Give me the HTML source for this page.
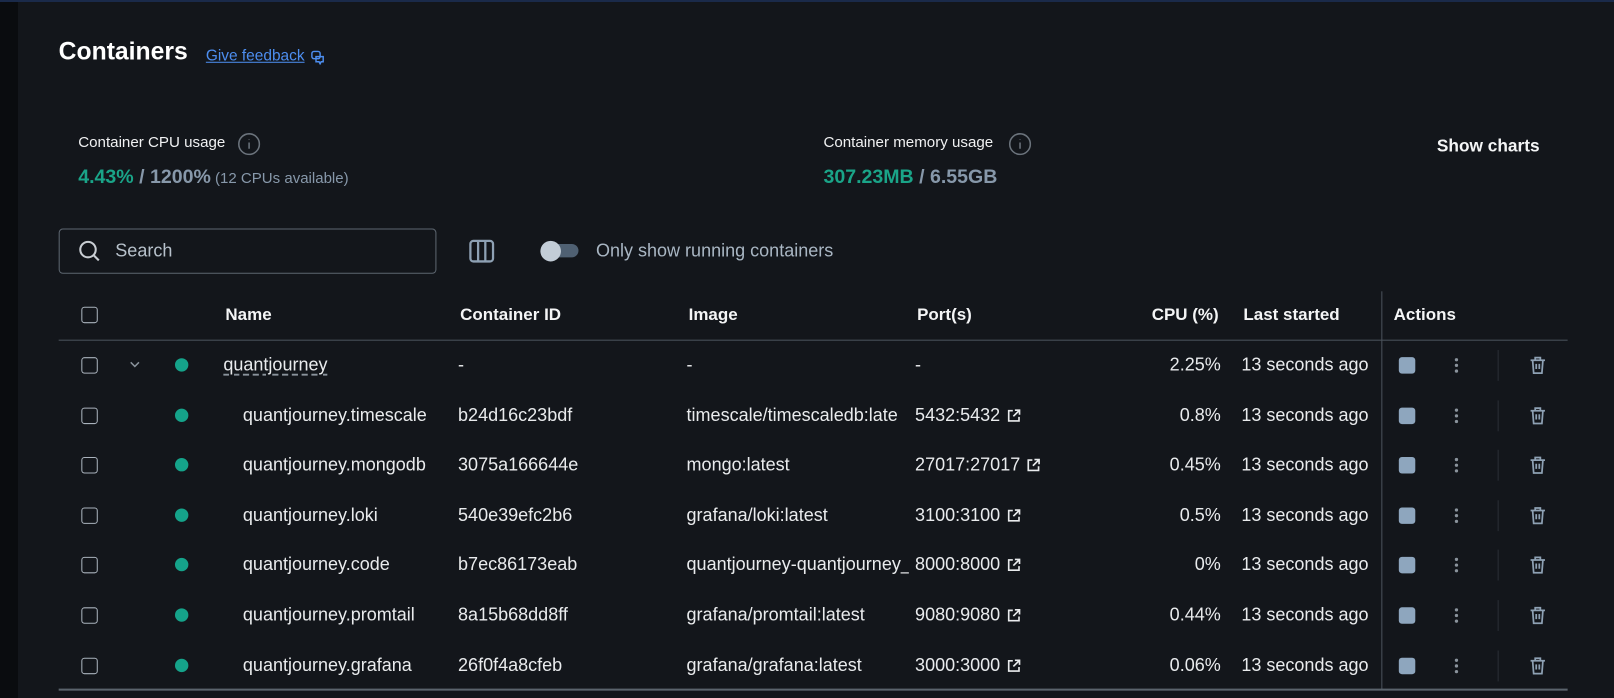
<!DOCTYPE html>
<html><head><meta charset="utf-8"><style>
*{margin:0;padding:0;box-sizing:border-box}
body{width:1614px;height:698px;background:#13161b;font-family:"Liberation Sans",sans-serif;color:#e6e8ea;position:relative;overflow:hidden}
#w{position:absolute;left:0;top:0;width:1568px;height:678px;transform:scale(1.0293);transform-origin:0 0}
.a{position:absolute;white-space:nowrap}
.cb{position:absolute;width:16px;height:16px;border:1.5px solid #aab3bd;border-radius:3px}
.dot{position:absolute;width:13px;height:13px;border-radius:50%;background:#15a38a}
.t{font-size:17.5px;color:#e9ebed}
.h{font-size:16.5px;font-weight:bold;color:#f4f5f6}
.stop{position:absolute;width:16px;height:16px;border-radius:3px;background:#8ea6be}
.sep{position:absolute;width:1px;height:30px;background:#2a2f36}
</style></head><body>
<div class="a" style="left:0;top:0;width:18px;height:698px;background:#0a0c0f"></div>
<div class="a" style="left:0;top:0;width:1614px;height:2px;background:#1a2a4a"></div>
<div id="w">
<div class="a" style="left:57px;top:37px;font-size:24px;font-weight:bold;color:#fff">Containers</div>
<div class="a" style="left:200px;top:46px;font-size:15px;color:#4d8ef0;text-decoration:underline">Give feedback</div>
<svg class="a" style="left:302px;top:49px" width="14" height="14" viewBox="0 0 14 14" fill="none" stroke="#4d8ef0" stroke-width="1.4"><rect x="1" y="1" width="8" height="7" rx="2"/><path d="M5 6h7v5l-2 0-1 2-1-2h-3z"/></svg>

<div class="a" style="left:76px;top:131px;font-size:14.7px;color:#f0f1f2">Container CPU usage</div>
<svg class="a" style="left:231px;top:129px" width="22" height="22" viewBox="0 0 22 22" fill="none" stroke="#6b737c" stroke-width="1.5"><circle cx="11" cy="11" r="10"/><path d="M11 9.5v6M11 6.5v.5"/></svg>
<div class="a" style="left:76px;top:162px;font-size:19px;font-weight:bold;color:#1aa488">4.43%<span style="color:#8798aa"> / 1200%</span><span style="font-weight:normal;font-size:14.6px;color:#8798aa"> (12 CPUs available)</span></div>

<div class="a" style="left:800px;top:131px;font-size:14.7px;color:#f0f1f2">Container memory usage</div>
<svg class="a" style="left:980px;top:129px" width="22" height="22" viewBox="0 0 22 22" fill="none" stroke="#6b737c" stroke-width="1.5"><circle cx="11" cy="11" r="10"/><path d="M11 9.5v6M11 6.5v.5"/></svg>
<div class="a" style="left:800px;top:162px;font-size:19px;font-weight:bold;color:#1aa488">307.23MB<span style="color:#8798aa"> / 6.55GB</span></div>
<div class="a" style="left:1396px;top:132px;font-size:16.8px;font-weight:bold;color:#f4f5f6">Show charts</div>

<div class="a" style="left:57px;top:222px;width:367px;height:44px;border:1px solid #5d6670;border-radius:4px"></div>
<svg class="a" style="left:76px;top:233px" width="22" height="22" viewBox="0 0 22 22" fill="none" stroke="#c9ced3" stroke-width="2"><circle cx="9.5" cy="9.5" r="7.5"/><path d="M15 15l5 5"/></svg>
<div class="a" style="left:112px;top:233px;font-size:17.5px;color:#b7c1cb">Search</div>
<svg class="a" style="left:455px;top:232px" width="26" height="24" viewBox="0 0 26 24" fill="none" stroke="#8ea1b4" stroke-width="2.2"><rect x="2" y="2" width="22" height="20" rx="3"/><path d="M9.5 2v20M16.5 2v20"/></svg>
<div class="a" style="left:526px;top:237px;width:36px;height:13px;border-radius:7px;background:#4f6072"></div>
<div class="a" style="left:525px;top:234px;width:20px;height:20px;border-radius:50%;background:#c3cdd7"></div>
<div class="a" style="left:579px;top:233px;font-size:17.5px;color:#a9b6c3">Only show running containers</div>

<div class="a" style="left:1342px;top:283px;width:1px;height:387px;background:#4a525b"></div>
<div class="a" style="left:57px;top:330px;width:1466px;height:1px;background:#4a525b"></div>
<div class="a" style="left:57px;top:669px;width:1466px;height:2px;background:#5a636c"></div>

<div class="cb" style="left:79px;top:298px"></div>
<div class="a h" style="left:219px;top:297px">Name</div>
<div class="a h" style="left:447px;top:297px">Container ID</div>
<div class="a h" style="left:669px;top:297px">Image</div>
<div class="a h" style="left:891px;top:297px">Port(s)</div>
<div class="a h" style="right:384px;top:297px">CPU (%)</div>
<div class="a h" style="left:1208px;top:297px">Last started</div>
<div class="a h" style="left:1354px;top:297px">Actions</div>

<div id="rows"></div>
</div>
<script>
var R=[["quantjourney","-","-","-","2.25%",1],
["quantjourney.timescale","b24d16c23bdf","timescale/timescaledb:late","5432:5432","0.8%"],
["quantjourney.mongodb","3075a166644e","mongo:latest","27017:27017","0.45%"],
["quantjourney.loki","540e39efc2b6","grafana/loki:latest","3100:3100","0.5%"],
["quantjourney.code","b7ec86173eab","quantjourney-quantjourney_","8000:8000","0%"],
["quantjourney.promtail","8a15b68dd8ff","grafana/promtail:latest","9080:9080","0.44%"],
["quantjourney.grafana","26f0f4a8cfeb","grafana/grafana:latest","3000:3000","0.06%"]];
var h="";
var ext='<svg style="margin-left:6px;vertical-align:-2px" width="14" height="14" viewBox="0 0 14 14" fill="none" stroke="#e9ebed" stroke-width="1.6"><path d="M6 2H2v10h10V8M8 1.5h4.5V6M12.5 1.5L6.5 7.5"/></svg>';
R.forEach(function(r,i){var c=355+i*48.6;var t=c-11;
h+='<div class="cb" style="left:79px;top:'+(c-8)+'px"></div>';
if(r[5])h+='<svg class="a" style="left:126px;top:'+(c-4)+'px" width="10" height="7" viewBox="0 0 10 7" fill="none" stroke="#8a939c" stroke-width="1.4"><path d="M1 1l4 4 4-4"/></svg>';
h+='<div class="dot" style="left:170px;top:'+(c-7)+'px"></div>';
h+='<div class="a t" style="left:'+(r[5]?217:236)+'px;top:'+t+'px;'+(r[5]?'text-decoration:underline dashed #8a939c;text-underline-offset:4px':'')+'">'+r[0]+'</div>';
h+='<div class="a t" style="left:445px;top:'+t+'px">'+r[1]+'</div>';
h+='<div class="a t" style="left:667px;top:'+t+'px;width:216px;overflow:hidden">'+r[2]+'</div>';
h+='<div class="a t" style="left:889px;top:'+t+'px">'+r[3]+(r[5]?'':ext)+'</div>';
h+='<div class="a t" style="right:382px;top:'+t+'px">'+r[4]+'</div>';
h+='<div class="a t" style="left:1206px;top:'+t+'px">13 seconds ago</div>';
h+='<div class="stop" style="left:1359px;top:'+(c-8)+'px"></div>';
h+='<svg class="a" style="left:1412px;top:'+(c-8)+'px" width="6" height="16"><circle cx="3" cy="2.5" r="1.6" fill="#8a939c"/><circle cx="3" cy="8" r="1.6" fill="#8a939c"/><circle cx="3" cy="13.5" r="1.6" fill="#8a939c"/></svg>';
h+='<div class="sep" style="left:1455px;top:'+(c-15)+'px"></div>';
h+='<svg class="a" style="left:1486px;top:'+(c-9)+'px" width="16" height="18" viewBox="0 0 16 18" fill="none" stroke="#8ea1b4" stroke-width="1.7"><path d="M1 4h14M5.5 4V1.5h5V4M3 4l1 12.5h8L13 4M6.5 7.5v5M9.5 7.5v5"/></svg>';
});
document.getElementById("rows").innerHTML=h;
</script>
</body></html>
